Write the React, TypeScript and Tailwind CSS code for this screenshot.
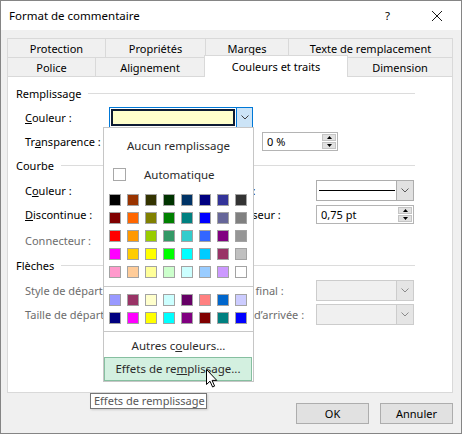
import type { ReactNode } from "react";

const standardColors = [
  "#000000", "#993300", "#333300", "#003300", "#003366", "#000080", "#333399", "#333333",
  "#800000", "#ff6600", "#808000", "#008000", "#008080", "#0000ff", "#666699", "#808080",
  "#ff0000", "#ff9900", "#99cc00", "#339966", "#33cccc", "#3366ff", "#800080", "#969696",
  "#ff00ff", "#ffcc00", "#ffff00", "#00ff00", "#00ffff", "#00ccff", "#993366", "#c0c0c0",
  "#ff99cc", "#ffcc99", "#ffff99", "#ccffcc", "#ccffff", "#99ccff", "#cc99ff", "#ffffff",
];

const recentColors = [
  "#9999ff", "#993366", "#ffffcc", "#ccffff", "#660066", "#ff8080", "#0066cc", "#ccccff",
  "#000080", "#ff00ff", "#ffff00", "#00ffff", "#800080", "#800000", "#008080", "#0000ff",
];

const topTabs = [
  { label: "Protection", w: "w-[99px]" },
  { label: "Propriétés", w: "w-[100px]" },
  { label: "Marges", w: "w-[83px]" },
  { label: "Texte de remplacement", w: "w-[164px]" },
];

function Chevron({ color = "#5a5a5a" }: { color?: string }) {
  return (
    <svg width="8" height="5" viewBox="0 0 8 5">
      <polyline points="0.5,0.5 4,4 7.5,0.5" fill="none" stroke={color} strokeWidth="1" />
    </svg>
  );
}

function SpinBox({ value, w }: { value: string; w: string }) {
  return (
    <div className={`${w} h-[19px] flex border border-[#b4b4b4] bg-white`}>
      <div className="flex-1 flex items-center pl-[4px]">{value}</div>
      <div className="w-[16px] flex flex-col gap-px p-px">
        <div className="flex-1 bg-[#e1e1e1] border border-[#c4c4c4] flex items-center justify-center">
          <svg width="5" height="3" viewBox="0 0 5 3">
            <polygon points="0,3 2.5,0 5,3" fill="#000" />
          </svg>
        </div>
        <div className="flex-1 bg-[#e1e1e1] border border-[#c4c4c4] flex items-center justify-center">
          <svg width="5" height="3" viewBox="0 0 5 3">
            <polygon points="0,0 2.5,3 5,0" fill="#000" />
          </svg>
        </div>
      </div>
    </div>
  );
}

function ComboBox({ disabled, children }: { disabled?: boolean; children?: ReactNode }) {
  return (
    <div
      className={`w-[98px] h-[21px] flex border ${
        disabled ? "border-[#cccccc] bg-[#f0f0f0]" : "border-[#adadad] bg-white"
      }`}
    >
      <div className="flex-1 flex items-center pl-[2px] pr-[1px]">{children}</div>
      <div
        className={`w-[17px] flex items-center justify-center border-l ${
          disabled ? "border-[#cccccc] bg-[#e5e5e5]" : "border-[#adadad] bg-[#e1e1e1]"
        }`}
      >
        <Chevron color={disabled ? "#8a8a8a" : "#5a5a5a"} />
      </div>
    </div>
  );
}

function SectionTitle({ title, h }: { title: string; h: string }) {
  return (
    <div className={`${h} flex items-center`}>
      <span>{title}</span>
      <div className="flex-1 h-px bg-[#dcdcdc] ml-[7px]" />
    </div>
  );
}

function Swatches({ colors }: { colors: string[] }) {
  return (
    <div className="grid grid-cols-[repeat(8,12px)] gap-[6px] px-[5px]">
      {colors.map((c, i) => (
        <div key={i} className="w-[12px] h-[12px] border border-[#a3a3a3]" style={{ backgroundColor: c }} />
      ))}
    </div>
  );
}

function ColorPopup() {
  return (
    <div className="absolute left-[-7px] top-full z-20 w-[151px] h-[255px] border border-[#c6c6c6] bg-white text-[#2b2b2b] text-[11.5px] flex flex-col">
      <div className="mt-[6px] h-[24px] flex items-center justify-center">Aucun remplissage</div>
      <div className="mt-[6px] h-[22px] flex items-center pl-[9px]">
        <div className="w-[13px] h-[13px] border border-[#a8a8a8]" />
        <span className="ml-[18px]">Automatique</span>
      </div>
      <div className="mt-[8px]">
        <Swatches colors={standardColors} />
      </div>
      <div className="mt-[8px] h-px bg-[#c8c8c8]" />
      <div className="mt-[7px]">
        <Swatches colors={recentColors} />
      </div>
      <div className="mt-[7px] h-px bg-[#c8c8c8]" />
      <div className="mt-[4px] h-[21px] flex items-center justify-center">
        Autres c<span className="underline">o</span>uleurs...
      </div>
      <div className="h-[24px] mr-px flex items-center justify-center bg-[#d3f0e0] border border-[#86bfa0]">
        Effets de re<span className="underline">m</span>plissage...
      </div>

      {/* mouse pointer resting on the last entry */}
      <svg className="absolute left-[102px] top-[241px]" width="12" height="19" viewBox="0 0 12 19">
        <path d="M0.5,0.5 L0.5,15.5 L4,12.2 L6.6,18 L8.6,17.1 L6.1,11.4 L10.8,11.4 Z" fill="#fff" stroke="#000" strokeWidth="1" />
      </svg>

      <div className="absolute left-[-14px] top-[265px] w-[117px] h-[16px] px-[3px] flex items-center whitespace-nowrap border border-[#767676] bg-white text-[#575757] text-[11px] shadow-[1px_1px_2px_rgba(0,0,0,0.15)]">
        Effets de remplissage
      </div>
    </div>
  );
}

export default function App() {
  return (
    <div className="w-[462px] h-[434px] border border-[#858585] bg-[#f0f0f0] flex flex-col font-['Noto_Sans',sans-serif] text-[11px] leading-none text-black select-none">
      {/* title bar */}
      <div className="h-[29px] bg-white flex items-center pl-[8px] text-[11.5px]">
        <span>Format de commentaire</span>
        <span className="ml-auto">?</span>
        <svg className="ml-[42px] mr-[19px]" width="10" height="10" viewBox="0 0 10 10">
          <path d="M0,0 L10,10 M10,0 L0,10" stroke="#1a1a1a" strokeWidth="1" />
        </svg>
      </div>

      <div className="flex flex-col pt-[8px] pl-[6px] pr-[8px]">
        {/* tabs */}
        <div className="flex h-[19px]">
          {topTabs.map((t, i) => (
            <div
              key={t.label}
              className={`${t.w} flex items-center justify-center border-t border-r border-[#d9d9d9] ${
                i === 0 ? "border-l" : ""
              }`}
            >
              {t.label}
            </div>
          ))}
        </div>
        <div className="flex h-[19px]">
          <div className="w-[89px] flex items-center justify-center border-t border-l border-r border-[#d9d9d9]">Police</div>
          <div className="w-[109px] flex items-center justify-center border-t border-r border-[#d9d9d9]">Alignement</div>
          <div className="relative z-10 self-start w-[144px] -ml-px h-[22px] -mt-[2px] flex items-center justify-center border-t border-l border-r border-[#d9d9d9] bg-white">
            Couleurs et traits
          </div>
          <div className="w-[105px] flex items-center justify-center border-t border-r border-[#d9d9d9]">Dimension</div>
        </div>

        {/* tab page */}
        <div className="h-[317px] border border-[#d9d9d9] bg-white pt-[4px] pl-[8px] pr-[37px] flex flex-col">
          <SectionTitle title="Remplissage" h="h-[24px]" />
          <div className="h-[24px] flex items-center pl-[9px]">
            <span className="w-[84px]"><span className="underline">C</span>ouleur :</span>
            <div className="relative w-[144px] h-[21px] flex border border-[#0078d7]">
              <div className="flex-1 p-px">
                <div className="h-full border-2 border-[#0d1b33] bg-[#ffffcc]" />
              </div>
              <div className="w-[16px] flex items-center justify-center border-l border-[#0078d7] bg-[#cce4f7]">
                <Chevron color="#404040" />
              </div>
              <ColorPopup />
            </div>
          </div>
          <div className="h-[24px] flex items-center pl-[9px]">
            <span className="w-[84px]">Tr<span className="underline">a</span>nsparence :</span>
            <div className="ml-[153px]">
              <SpinBox value="0 %" w="w-[76px]" />
            </div>
          </div>

          <SectionTitle title="Courbe" h="h-[25px]" />
          <div className="h-[24px] flex items-center pl-[9px]">
            <span className="w-[84px]">C<span className="underline">o</span>uleur :</span>
            <span className="ml-[116px] w-[91px]">Style :</span>
            <ComboBox>
              <div className="w-full h-px bg-black" />
            </ComboBox>
          </div>
          <div className="h-[25px] flex items-center pl-[9px]">
            <span className="w-[84px]"><span className="underline">D</span>iscontinue :</span>
            <span className="ml-[116px] w-[91px]">Épaisseur :</span>
            <SpinBox value="0,75 pt" w="w-[98px]" />
          </div>
          <div className="h-[26px] flex items-center pl-[9px] text-[#6d6d6d]">
            <span className="w-[84px]">Connecteur :</span>
          </div>

          <SectionTitle title="Flèches" h="h-[25px]" />
          <div className="h-[24px] flex items-center pl-[9px] text-[#6d6d6d]">
            <span className="w-[84px] whitespace-nowrap">Style de départ :</span>
            <span className="ml-[119px] w-[88px]">Style final :</span>
            <ComboBox disabled />
          </div>
          <div className="h-[25px] flex items-center pl-[9px] text-[#6d6d6d]">
            <span className="w-[84px] whitespace-nowrap">Taille de départ :</span>
            <span className="ml-[116px] w-[91px] whitespace-nowrap">Taille d’arrivée :</span>
            <ComboBox disabled />
          </div>
        </div>

        {/* dialog buttons */}
        <div className="mt-[10px] flex justify-end gap-[11px]">
          <button className="w-[73px] h-[21px] bg-[#e1e1e1] border border-[#adadad]">OK</button>
          <button className="w-[73px] h-[21px] bg-[#e1e1e1] border border-[#adadad]">Annuler</button>
        </div>
      </div>
    </div>
  );
}
